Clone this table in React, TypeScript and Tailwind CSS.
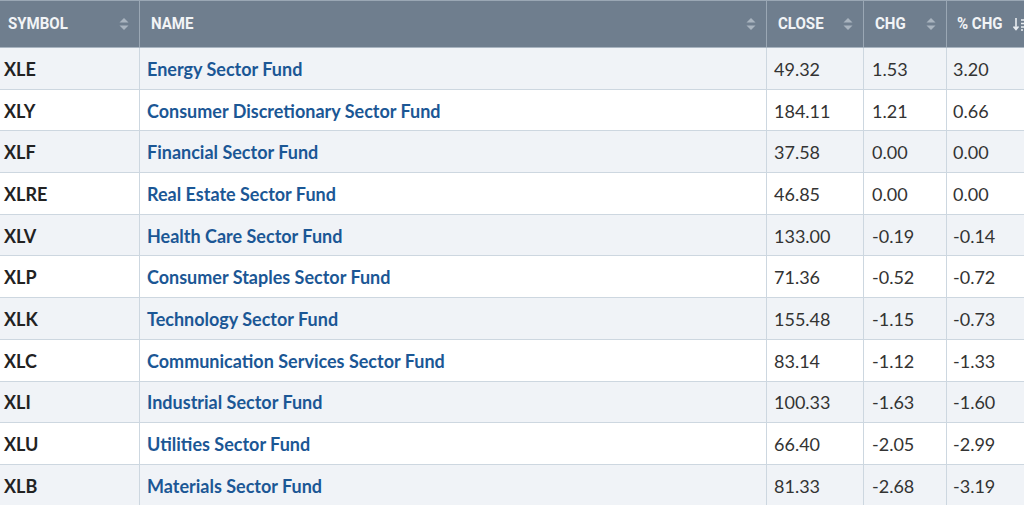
import React from "react"

type Row = {
  symbol: string
  name: string
  close: string
  chg: string
  pct: string
}

const rows: Row[] = [
  { symbol: "XLE", name: "Energy Sector Fund", close: "49.32", chg: "1.53", pct: "3.20" },
  { symbol: "XLY", name: "Consumer Discretionary Sector Fund", close: "184.11", chg: "1.21", pct: "0.66" },
  { symbol: "XLF", name: "Financial Sector Fund", close: "37.58", chg: "0.00", pct: "0.00" },
  { symbol: "XLRE", name: "Real Estate Sector Fund", close: "46.85", chg: "0.00", pct: "0.00" },
  { symbol: "XLV", name: "Health Care Sector Fund", close: "133.00", chg: "-0.19", pct: "-0.14" },
  { symbol: "XLP", name: "Consumer Staples Sector Fund", close: "71.36", chg: "-0.52", pct: "-0.72" },
  { symbol: "XLK", name: "Technology Sector Fund", close: "155.48", chg: "-1.15", pct: "-0.73" },
  { symbol: "XLC", name: "Communication Services Sector Fund", close: "83.14", chg: "-1.12", pct: "-1.33" },
  { symbol: "XLI", name: "Industrial Sector Fund", close: "100.33", chg: "-1.63", pct: "-1.60" },
  { symbol: "XLU", name: "Utilities Sector Fund", close: "66.40", chg: "-2.05", pct: "-2.99" },
  { symbol: "XLB", name: "Materials Sector Fund", close: "81.33", chg: "-2.68", pct: "-3.19" },
]

const cols = "grid grid-cols-[140px_627px_97px_83px_90px]"

const SortIcon = () => (
  <svg width="10" height="14" viewBox="0 0 10 14" className="shrink-0">
    <path d="M5 1 L9.5 5.5 H0.5 Z" fill="#a9b4bf" />
    <path d="M5 13 L9.5 8.5 H0.5 Z" fill="#a9b4bf" />
  </svg>
)

const SortDesc = () => (
  <svg width="14" height="16" viewBox="0 0 14 16" className="shrink-0">
    <path d="M3 2 V13 M0.5 10.5 L3 13.5 L5.5 10.5" stroke="#e9edf1" strokeWidth="1.6" fill="none" />
    <path d="M8 4 H13 M8 7.5 H12 M8 11 H11 M8 14 H10" stroke="#e9edf1" strokeWidth="1.6" />
  </svg>
)

const HeadCell = ({
  label,
  pad = "pl-[11px] pr-[10px] justify-between",
  icon = <SortIcon />,
}: {
  label: string
  pad?: string
  icon?: React.ReactNode
}) => (
  <div className={`flex items-center gap-2 border-r border-[#9aa7b4] ${pad} h-full`}>
    <span className="font-bold text-[16px] whitespace-nowrap text-[#f2f4f6] [font-family:Roboto,sans-serif] scale-x-[0.94] origin-left">
      {label}
    </span>
    {icon}
  </div>
)

export default function App() {
  return (
    <div className="w-[1024px] h-[505px] overflow-hidden bg-white [font-family:Lato,sans-serif]">
      <div className={`${cols} h-[48px] bg-[#6f7e8e] border-t border-[#9aa7b4] border-b border-b-[#a9b5c1]`}>
        <HeadCell label="SYMBOL" pad="pl-[8px] pr-[10px] justify-between" />
        <HeadCell label="NAME" />
        <HeadCell label="CLOSE" />
        <HeadCell label="CHG" />
        <HeadCell label="% CHG" icon={<SortDesc />} pad="pl-[10px] gap-[8px]" />
      </div>
      {rows.map((r, i) => (
        <div
          key={r.symbol}
          className={`${cols} h-[41.7px] border-b border-[#cdd7e0] ${
            i % 2 === 0 ? "bg-[#f0f3f7]" : "bg-white"
          }`}
        >
          <div className="flex items-center pl-[4px] pt-[2px] border-r border-[#cdd7e0] font-bold text-[18px] text-[#222]">
            {r.symbol}
          </div>
          <div className="flex items-center pl-[7px] pt-[2px] border-r border-[#cdd7e0] font-bold text-[18px] text-[#1b5795]">
            {r.name}
          </div>
          <div className="flex items-center pl-[7px] pt-[2px] border-r border-[#cdd7e0] text-[18px] text-[#333]">
            {r.close}
          </div>
          <div className="flex items-center pl-[8px] pt-[2px] border-r border-[#cdd7e0] text-[18px] text-[#333]">
            {r.chg}
          </div>
          <div className="flex items-center pl-[6px] pt-[2px] text-[18px] text-[#333]">
            {r.pct}
          </div>
        </div>
      ))}
    </div>
  )
}
